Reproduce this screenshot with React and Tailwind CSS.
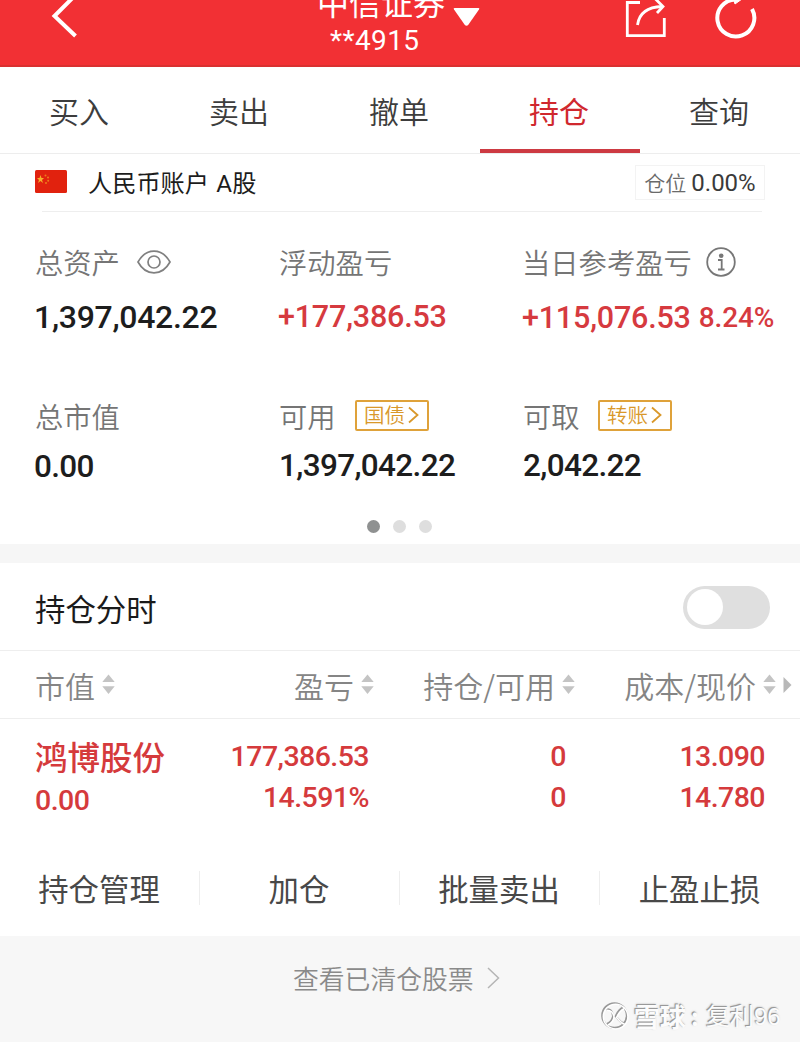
import React, { useState } from "react";

const tabs = ["买入", "卖出", "撤单", "持仓", "查询"];
const actions = ["持仓管理", "加仓", "批量卖出", "止盈止损"];

function SortIcon() {
  return (
    <svg width="13" height="21" viewBox="0 0 13 21" className="shrink-0 fill-[#c4c4c4]">
      <path d="M6.5 0.5L12.7 8H0.3z" />
      <path d="M6.5 20L12.7 12.3H0.3z" />
    </svg>
  );
}

function LinkTag({ children }) {
  return (
    <span className="mb-[2px] flex h-[31px] w-[74px] items-center justify-center rounded-[2px] border-2 border-[#dfa23a] text-[20.5px] leading-[27px] font-[350] text-[#d9982a]">
      <span className="-mt-px">{children}</span>
      <svg width="11" height="18" viewBox="0 0 11 18" fill="none" className="ml-[3px] stroke-[#d9982a]">
        <path d="M1 1.5L9.5 9L1 16.5" strokeWidth="1.8" />
      </svg>
    </span>
  );
}

function Header() {
  return (
    <div className="relative flex h-[67px] items-start justify-between overflow-hidden border-b-2 border-[#d93030] bg-[#f23034] text-white">
      <svg width="80" height="40" viewBox="0 0 80 40" fill="none" stroke="white" strokeWidth="4">
        <path d="M75.5 -5L54.5 16L75.5 36" />
      </svg>
      <div className="absolute -top-[19px] left-[317px] flex">
        <div className="flex w-[128px] flex-col">
          <span className="h-[40px] text-[32px] leading-[40px] whitespace-nowrap">中信证券</span>
          <span className="pl-[13px] font-['Roboto'] text-[28px] leading-[40px] tracking-[0.4px]">**4915</span>
        </div>
        <svg width="28" height="19" viewBox="0 0 28 19" fill="white" className="mt-[27px] ml-[8px]">
          <path d="M1.5 0H25.5Q27 0 26 1.5L15.5 16.5Q13.5 19 11.5 16.5L1 1.5Q0 0 1.5 0z" />
        </svg>
      </div>
      <svg width="180" height="44" viewBox="0 0 180 44" fill="none" stroke="white">
        <path d="M20 2.500H7.300V35.700H44.300V18" strokeWidth="2.800" />
        <path d="M17.500 25C19 14 27 7 42 6.500" strokeWidth="2.800" />
        <path d="M35.500 -1L43 6.500L37 13" strokeWidth="2.800" />
        <path d="M115.500 -0.500A18.500 18.500 0 1 0 132 9" strokeWidth="4" />
        <path d="M113 -3L122 -1L115 4z" fill="white" strokeWidth="1" />
      </svg>
    </div>
  );
}

function Tabs({ active, setActive }) {
  return (
    <div className="grid h-[87px] grid-cols-5 border-b border-[#ededed]">
      {tabs.map((tab) => (
        <button
          key={tab}
          onClick={() => setActive(tab)}
          className={`h-[86px] border-b-4 pt-[2px] pr-[2px] text-[30px] leading-[82px] ${
            active === tab ? "border-[#cd3a42] text-[#d0282e]" : "border-transparent font-[350] text-[#3d3d3d]"
          }`}
        >
          {tab}
        </button>
      ))}
    </div>
  );
}

function AccountRow() {
  return (
    <div className="flex h-[57px] items-center pr-[35px] pl-[35px]">
      <svg width="32" height="23" viewBox="0 0 32 23" className="-mt-[2px]">
        <rect width="32" height="23" rx="1.5" fill="#e1220e" />
        <path d="M5.500 5L6.500 8L9 8L7 10L8 13L5.500 11L3 13L4 10L2 8L4.500 8z" fill="#f5b02c" />
        <g fill="#ee7a1c">
          <circle cx="10.500" cy="5.500" r="1" />
          <circle cx="13" cy="7.500" r="1" />
          <circle cx="13.200" cy="10.700" r="1" />
          <circle cx="11" cy="13" r="1" />
        </g>
      </svg>
      <span className="mt-px ml-[21px] text-[24.200px] leading-[30px] text-[#1c1c1c]">
        人民币账户 <span className="ml-[2px] font-['Roboto']">A</span>股
      </span>
      <div className="ml-auto flex h-[35px] w-[130px] items-center justify-center border border-[#f3f3f3]">
        <span className="-mt-[2px] text-[21px] leading-[30px] font-[350] text-[#6a6a6a]">仓位</span>
        <span className="ml-[5px] font-['Roboto'] text-[24px] leading-[30px] text-[#3a3a3a]">0.00%</span>
      </div>
    </div>
  );
}

function Summary() {
  return (
    <div className="h-[332px] pl-[35px]">
      <div className="grid grid-cols-[244px_243px_1fr] pt-[30px] text-[28.300px] leading-[40px] font-[350] text-[#757575]">
        <div className="flex items-center">
          总资产
          <svg width="34" height="24" viewBox="0 0 34 24" fill="none" className="ml-[17px] stroke-[#808080]">
            <path d="M1 12C9 -2.500 25 -2.500 33 12C25 26.500 9 26.500 1 12z" strokeWidth="1.7" />
            <circle cx="17" cy="12" r="6" strokeWidth="1.7" />
          </svg>
        </div>
        <div>浮动盈亏</div>
        <div className="flex items-center">
          当日参考盈亏
          <svg width="30" height="30" viewBox="0 0 30 30" fill="none" className="ml-[14px] stroke-[#777]">
            <circle cx="15" cy="15" r="13.800" strokeWidth="1.8" />
            <circle cx="15.200" cy="8.800" r="2.300" fill="#777" stroke="none" />
            <path d="M12 13H15.700V22.500M12 22.500H18.500" strokeWidth="1.8" />
          </svg>
        </div>
      </div>
      <div className="grid h-[41px] grid-cols-[244px_243px_1fr] pt-[15px] font-['Roboto'] leading-[40px] font-medium text-[#d63a3f]">
        <div className="-ml-px text-[32px] tracking-[-0.300px] text-[#1d1d1d]">1,397,042.22</div>
        <div className="-ml-px text-[30.500px] tracking-[-0.200px]">+177,386.53</div>
        <div className="flex pt-px text-[30.500px] tracking-[-0.200px] whitespace-nowrap">
          +115,076.53<span className="ml-[8px] text-[28px] tracking-[-0.100px]">8.24%</span>
        </div>
      </div>
      <div className="grid grid-cols-[244px_244px_1fr] pt-[73px] text-[28.300px] leading-[40px] font-[350] text-[#757575]">
        <div>总市值</div>
        <div className="flex items-center gap-[19px]">
          可用<LinkTag>国债</LinkTag>
        </div>
        <div className="flex items-center gap-[18px]">
          可取<LinkTag>转账</LinkTag>
        </div>
      </div>
      <div className="grid grid-cols-[244px_244px_1fr] pt-[10px] font-['Roboto'] text-[31.500px] leading-[40px] font-medium tracking-[-0.650px] text-[#1d1d1d]">
        <div className="-ml-px pt-px">0.00</div>
        <div>1,397,042.22</div>
        <div>2,042.22</div>
      </div>
      <div className="mt-[33px] -ml-[36px] flex justify-center gap-[13px]">
        <span className="size-[13px] rounded-full bg-[#8f9191]" />
        <span className="size-[13px] rounded-full bg-[#dedede]" />
        <span className="size-[13px] rounded-full bg-[#dedede]" />
      </div>
    </div>
  );
}

function Holdings() {
  return (
    <>
      <div className="grid h-[68px] grid-cols-[198px_141px_201px_1fr] border-b border-[#eeeeee] pl-[35px] text-[30px] leading-[66px] font-[350] text-[#858585]">
        <div className="flex items-center gap-[7px]">
          市值<SortIcon />
        </div>
        <div className="flex items-center justify-end gap-[7px]">
          盈亏<SortIcon />
        </div>
        <div className="flex items-center justify-end gap-[7px] whitespace-nowrap">
          持仓/可用<SortIcon />
        </div>
        <div className="flex items-center justify-end gap-[7px] pr-[8px] whitespace-nowrap">
          成本/现价<SortIcon />
          <svg width="9" height="16" viewBox="0 0 9 16" className="fill-[#b8b8b8]">
            <path d="M0.500 0L8.500 8L0.500 16z" />
          </svg>
        </div>
      </div>
      <div className="grid h-[121px] grid-cols-[174px_160px_197px_199px] content-start pt-[17px] pl-[35px] text-right font-['Roboto'] text-[28.500px] leading-[41px] font-medium tracking-[-0.550px] text-[#d53a3c]">
        <div className="text-left font-['Noto_Sans_CJK_SC'] text-[32.500px] leading-[40px] tracking-normal">鸿博股份</div>
        <div>177,386.53</div>
        <div>0</div>
        <div>13.090</div>
        <div className="pt-[3px] text-left">0.00</div>
        <div>14.591%</div>
        <div>0</div>
        <div>14.780</div>
      </div>
    </>
  );
}

function Footer() {
  return (
    <div className="h-[106px] bg-[#f7f7f7]">
      <div className="flex items-center pt-[22px] pl-[293px] text-[25.800px] leading-[40px] font-[350] text-[#8a8a8a]">
        查看已清仓股票
        <svg width="13" height="22" viewBox="0 0 13 22" fill="none" className="ml-[13px] stroke-[#b5b5b5]">
          <path d="M1 1L11.500 11L1 21" strokeWidth="1.5" />
        </svg>
      </div>
      <div className="flex items-center pl-[601px] text-[#fcfcfc] [text-shadow:-1px_-1px_0_#999,-1px_-1px_2px_#aaa]">
        <svg width="28" height="28" viewBox="0 0 28 28" fill="none">
          <g stroke="#999" strokeWidth="2">
            <circle cx="13.500" cy="13.500" r="12.300" />
            <path d="M5 7C11 7 11.500 11 12 14C11.500 18 8 21 6 22M22 5.500C17 8 16 12 14.500 14.500C17 16 18 20 23 21.500" />
          </g>
          <g stroke="#fff" strokeWidth="1.500">
            <circle cx="14.600" cy="14.600" r="12.300" />
            <path d="M6 8.200C11 8.200 12.500 12 13 15C12.500 19 9 22 7 23M23 6.700C18 9.200 17 13 15.500 15.500C18 17 19 21 24 22.500" />
          </g>
        </svg>
        <span className="ml-[5px] text-[26px] leading-[34px] font-bold">雪球</span>
        <span className="w-[20px] pl-[5px] text-[24px] leading-[34px] font-bold">:</span>
        <span className="text-[24px] leading-[34px]">
          复利<span className="font-['Liberation_Sans']">96</span>
        </span>
      </div>
    </div>
  );
}

function App() {
  const [active, setActive] = useState("持仓");
  const [minuteChart, setMinuteChart] = useState(false);

  return (
    <div className="h-[1042px] w-[800px] overflow-hidden bg-white font-['Noto_Sans_CJK_SC',sans-serif]">
      <Header />
      <Tabs active={active} setActive={setActive} />
      <AccountRow />
      <div className="mr-[38px] ml-[42px] h-px bg-[#eeeeee]" />
      <Summary />
      <div className="h-[19px] bg-[#f6f6f6]" />

      {/* minute chart switch */}
      <div className="flex h-[88px] items-center justify-between border-b border-[#eeeeee] pr-[30px] pl-[35px]">
        <span className="mt-[2px] text-[30.400px] leading-[40px] text-[#1a1a1a]">持仓分时</span>
        <button
          onClick={() => setMinuteChart(!minuteChart)}
          className={`mt-px flex h-[43px] w-[87px] cursor-pointer items-center rounded-full p-[4px] ${
            minuteChart ? "justify-end bg-[#cd3a42]" : "bg-[#dfdfdf]"
          }`}
        >
          <span className="size-[36px] rounded-full bg-white" />
        </button>
      </div>
      <Holdings />

      {/* actions */}
      <div className="grid h-[96px] grid-cols-4 items-center text-center text-[30.400px] text-[#484848]">
        {actions.map((item) => (
          <div key={item} className="h-[34px] border-r border-[#eeeeee] pr-px leading-[35px] last:border-r-0">
            {item}
          </div>
        ))}
      </div>
      <Footer />
    </div>
  );
}

export default App;
